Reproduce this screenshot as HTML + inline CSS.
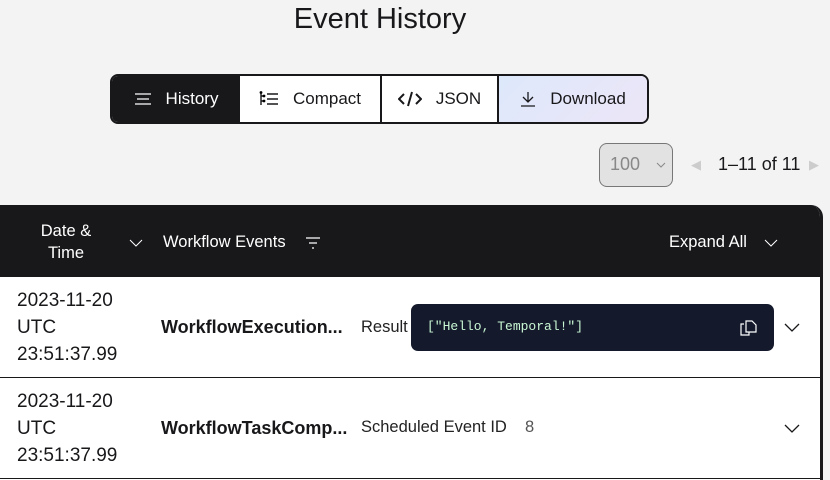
<!DOCTYPE html>
<html><head><meta charset="utf-8"><style>
*{margin:0;padding:0;box-sizing:border-box}
body{width:830px;height:480px;background:#f3f3f3;font-family:"Liberation Sans",sans-serif;color:#18181b;position:relative;overflow:hidden}
.a{position:absolute}
.title{left:0;width:760px;top:3px;text-align:center;font-size:29px}
.grp{left:110px;top:74px;width:539px;height:50px;border:2px solid #18181b;border-radius:8px;overflow:hidden;display:flex;background:#fff}
.grp div{display:flex;align-items:center;justify-content:center;gap:14px;font-size:17px;height:100%}
.b1{width:128px;background:#18181b;color:#fff}
.b2{width:142px;border-right:2px solid #18181b}
.b3{width:117px;border-right:2px solid #18181b}
.b4{flex:1;background:linear-gradient(135deg,#dde8fb,#ece6f7)}
.sel{left:599px;top:143px;width:74px;height:44px;border:1px solid #777;border-radius:8px;background:#e2e2e2;color:#888;font-size:18px;padding:10px 0 0 10px}
.tbl{left:0;top:205px;width:823px;height:275px;background:#fff;border-right:3px solid #18181b;border-top-right-radius:12px;overflow:hidden}
.hd{position:absolute;left:0;top:0;width:100%;height:72px;background:#18181b;color:#fff;font-size:16.5px}
.row{position:absolute;left:0;width:100%;height:101px;border-bottom:1px solid #18181b;font-size:19px}
.dt{position:absolute;left:17px;top:10px;line-height:27px}
.nm{position:absolute;left:161px;font-weight:bold;font-size:18px}
.lb{position:absolute;font-size:16.5px;color:#222}
</style></head><body>
<div class="a title">Event History</div>
<div class="a grp">
<div class="b1"><svg width="18" height="14"><path d="M1 2H17M3 7H15M1 12H17" stroke="#fff" stroke-width="1.3"/></svg>History</div>
<div class="b2"><svg width="20" height="16"><path d="M2 1V14M2 5H5M2 10H5M8 3H19M8 8H19M8 13H19" stroke="#18181b" stroke-width="1.4" fill="none"/><circle cx="2" cy="1.5" r="1.4"/><circle cx="5" cy="5" r="1.4"/><circle cx="5" cy="10" r="1.4"/></svg>Compact</div>
<div class="b3"><svg width="24" height="16"><path d="M6 3L1 8L6 13M18 3L23 8L18 13M14 1L10 15" stroke="#18181b" stroke-width="2" fill="none"/></svg>JSON</div>
<div class="b4"><svg width="16" height="16"><path d="M8 1V11M3 6L8 11L13 6M1 15H15" stroke="#18181b" stroke-width="1.3" fill="none"/></svg>Download</div>
</div>
<div class="a sel">100<svg class="a" style="left:56px;top:18px" width="10" height="6"><path d="M1 1L5 5L9 1" stroke="#888" fill="none"/></svg></div>
<div class="a" style="left:691px;top:157px;color:#ccc;font-size:13px">◀</div>
<div class="a" style="left:718px;top:154px;font-size:18px">1–11 of 11</div>
<div class="a" style="left:809px;top:157px;color:#ccc;font-size:13px">▶</div>
<div class="a tbl">
<div class="hd">
<div class="a" style="left:28px;top:15px;width:76px;text-align:center;line-height:22px">Date &amp;<br>Time</div>
<svg class="a" style="left:129px;top:34px" width="14" height="8"><path d="M1 1L7 7L13 1" stroke="#fff" fill="none"/></svg>
<div class="a" style="left:163px;top:28px">Workflow Events</div>
<svg class="a" style="left:305px;top:31px" width="16" height="14"><path d="M1 2H15M4 7H12M7 12H9" stroke="#fff" stroke-width="1.3"/></svg>
<div class="a" style="left:669px;top:28px">Expand All</div>
<svg class="a" style="left:764px;top:34px" width="14" height="8"><path d="M1 1L7 7L13 1" stroke="#fff" fill="none"/></svg>
</div>
<div class="row" style="top:72px">
<div class="dt">2023-11-20<br>UTC<br>23:51:37.99</div>
<div class="nm" style="top:40px">WorkflowExecution...</div>
<div class="lb" style="left:361px;top:41px">Result</div>
<div class="a" style="left:411px;top:27px;width:363px;height:47px;background:#141a2b;border-radius:7px">
<div class="a" style="left:16px;top:15px;font-family:'Liberation Mono',monospace;font-size:13px;color:#c9f7d4">["Hello, Temporal!"]</div>
<svg class="a" style="left:328px;top:15px" width="20" height="18"><path d="M5 5H2V16H10V13M7 2H13L17 6V13H7Z" stroke="#fff" stroke-width="1.2" fill="none"/></svg>
</div>
<svg class="a" style="left:784px;top:46px" width="16" height="9"><path d="M1 1L8 8L15 1" stroke="#18181b" stroke-width="1.3" fill="none"/></svg>
</div>
<div class="row" style="top:173px">
<div class="dt">2023-11-20<br>UTC<br>23:51:37.99</div>
<div class="nm" style="top:40px">WorkflowTaskComp...</div>
<div class="lb" style="left:361px;top:40px">Scheduled Event ID</div>
<div class="lb" style="left:525px;top:40px;color:#555">8</div>
<svg class="a" style="left:784px;top:46px" width="16" height="9"><path d="M1 1L8 8L15 1" stroke="#18181b" stroke-width="1.3" fill="none"/></svg>
</div>
</div>
</body></html>
